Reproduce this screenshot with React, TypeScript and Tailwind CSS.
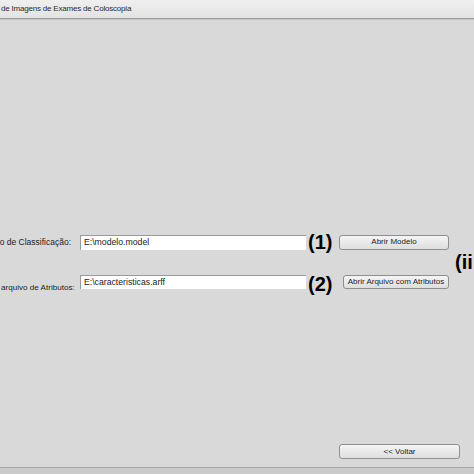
export default function App() {
  const font = { fontFamily: '"Liberation Sans", Arial, sans-serif' };
  return (
    <div
      className="w-[474px] h-[474px] overflow-hidden flex flex-col bg-[#d9d9d9] text-[#1a1a1a]"
      style={font}
    >
      {/* title bar */}
      <div className="h-[19px] shrink-0 flex items-center pl-[1px] bg-gradient-to-b from-[#efefef] to-[#e3e3e3] border-b border-[#9c9c9c]">
        <span className="text-[8px] tracking-[-0.2px] text-[#2a2a2a] whitespace-nowrap">
          de Imagens de Exames de Coloscopia
        </span>
      </div>
      <div className="h-px shrink-0 bg-[#c4c4c4]" />

      {/* body */}
      <div className="relative flex-1 flex flex-col pb-[8px]">
        {/* row 1 */}
        <div className="mt-[212px] h-[20px] flex items-center">
          <div className="w-[80px] shrink-0 flex justify-end pr-[9px] text-[8.5px] whitespace-nowrap text-[#222]">
            o de Classificação:
          </div>
          <div className="w-[226px] h-[15px] shrink-0 bg-white border-t border-l border-[#9a9a9a] flex items-center pl-[3px] text-[8.7px]">
            E:\modelo.model
          </div>
          <div className="w-[33px] shrink-0 pl-[2px] text-[20px] font-bold leading-none text-black">
            (1)
          </div>
          <button className="w-[110px] h-[15px] shrink-0 rounded-[3px] border border-[#8f8f8f] bg-gradient-to-b from-[#f5f5f5] to-[#dedede] text-[8px] text-[#222] leading-none">
            Abrir Modelo
          </button>
        </div>

        {/* row 2 */}
        <div className="mt-[21px] h-[20px] flex items-center">
          <div className="w-[80px] shrink-0 flex justify-start pl-[1px] text-[8.1px] whitespace-nowrap text-[#222] pt-[11px]">
            arquivo de Atributos:
          </div>
          <div className="w-[226px] h-[14px] shrink-0 bg-white border-t border-l border-[#9a9a9a] flex items-center pl-[3px] text-[8.7px] mt-[-2px]">
            E:\caracteristicas.arff
          </div>
          <div className="w-[37px] shrink-0 pl-[2px] text-[20px] font-bold leading-none text-black pt-[2px]">
            (2)
          </div>
          <button className="w-[106px] h-[14px] shrink-0 rounded-[3px] border border-[#8f8f8f] bg-gradient-to-b from-[#f5f5f5] to-[#dedede] text-[8px] text-[#222] leading-none mt-[-2px]">
            Abrir Arquivo com Atributos
          </button>
        </div>

        {/* annotation */}
        <span className="absolute left-[455px] top-[232px] text-[20px] font-bold leading-none text-black whitespace-nowrap">
          (ii
        </span>

        {/* footer button */}
        <div className="mt-auto flex pl-[339px]">
          <button className="w-[121px] h-[15px] rounded-[3px] border border-[#8f8f8f] bg-gradient-to-b from-[#f5f5f5] to-[#dedede] text-[8px] text-[#222] leading-none">
            &lt;&lt; Voltar
          </button>
        </div>
      </div>

      {/* bottom strip */}
      <div className="h-[7px] shrink-0 border-t border-[#a5a5a5] bg-[#cbcbcb]" />
    </div>
  );
}
